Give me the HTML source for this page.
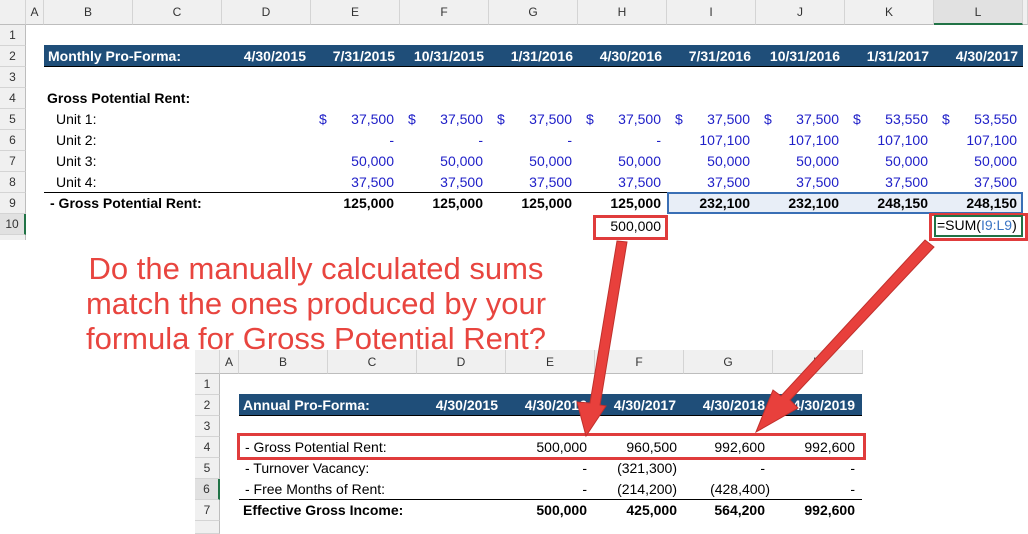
<!DOCTYPE html>
<html><head><meta charset="utf-8"><style>
*{margin:0;padding:0;box-sizing:border-box}
body{width:1028px;height:534px;background:#fff;position:relative;overflow:hidden;font-family:"Liberation Sans",Arial,sans-serif;font-size:13px;color:#000}
.a{position:absolute;white-space:nowrap}
.hd{position:absolute;background:#f0f0f0;border-right:1px solid #d4d4d4;border-bottom:1px solid #bdbdbd;color:#333;font-size:12px;text-align:center}
.rn{position:absolute;background:#f0f0f0;border-bottom:1px solid #d4d4d4;border-right:1px solid #bdbdbd;color:#333;font-size:12px;text-align:center}
.r{text-align:right}
.b{font-weight:bold}
.bl{color:#2020c8}
.w{color:#fff;font-weight:bold}
.l{font-size:14px}
</style></head><body>

<!-- TOP SHEET -->
<div class="hd" style="left:0;top:0;width:26px;height:25px"></div>
<div class="hd" style="left:26px;top:0;width:18px;height:25px;line-height:25px">A</div>
<div class="hd" style="left:44px;top:0;width:89px;height:25px;line-height:25px">B</div>
<div class="hd" style="left:133px;top:0;width:89px;height:25px;line-height:25px">C</div>
<div class="hd" style="left:222px;top:0;width:89px;height:25px;line-height:25px">D</div>
<div class="hd" style="left:311px;top:0;width:89px;height:25px;line-height:25px">E</div>
<div class="hd" style="left:400px;top:0;width:89px;height:25px;line-height:25px">F</div>
<div class="hd" style="left:489px;top:0;width:89px;height:25px;line-height:25px">G</div>
<div class="hd" style="left:578px;top:0;width:89px;height:25px;line-height:25px">H</div>
<div class="hd" style="left:667px;top:0;width:89px;height:25px;line-height:25px">I</div>
<div class="hd" style="left:756px;top:0;width:89px;height:25px;line-height:25px">J</div>
<div class="hd" style="left:845px;top:0;width:89px;height:25px;line-height:25px">K</div>
<div class="hd" style="left:934px;top:0;width:89px;height:25px;line-height:25px;background:#e1e1e1;border-bottom:2px solid #217346">L</div>
<div class="hd" style="left:1023px;top:0;width:5px;height:25px"></div>

<div class="rn" style="left:0;top:25px;width:26px;height:21px;line-height:21px">1</div>
<div class="rn" style="left:0;top:46px;width:26px;height:21px;line-height:21px">2</div>
<div class="rn" style="left:0;top:67px;width:26px;height:21px;line-height:21px">3</div>
<div class="rn" style="left:0;top:88px;width:26px;height:21px;line-height:21px">4</div>
<div class="rn" style="left:0;top:109px;width:26px;height:21px;line-height:21px">5</div>
<div class="rn" style="left:0;top:130px;width:26px;height:21px;line-height:21px">6</div>
<div class="rn" style="left:0;top:151px;width:26px;height:21px;line-height:21px">7</div>
<div class="rn" style="left:0;top:172px;width:26px;height:21px;line-height:21px">8</div>
<div class="rn" style="left:0;top:193px;width:26px;height:21px;line-height:21px">9</div>
<div class="rn" style="left:0;top:214px;width:26px;height:21px;line-height:21px;background:#e1e1e1;border-right:2px solid #217346">10</div>
<div class="rn" style="left:0;top:235px;width:26px;height:5px;border-bottom:none"></div>

<div class="a" style="left:44px;top:45px;width:979px;height:22px;background:#1f4e79;border-bottom:1px solid #000"></div>
<div class="a w l" style="left:48px;top:48px">Monthly Pro-Forma:</div>
<div class="a w r l" style="left:222px;top:48px;width:84px">4/30/2015</div>
<div class="a w r l" style="left:311px;top:48px;width:84px">7/31/2015</div>
<div class="a w r l" style="left:400px;top:48px;width:84px">10/31/2015</div>
<div class="a w r l" style="left:489px;top:48px;width:84px">1/31/2016</div>
<div class="a w r l" style="left:578px;top:48px;width:84px">4/30/2016</div>
<div class="a w r l" style="left:667px;top:48px;width:84px">7/31/2016</div>
<div class="a w r l" style="left:756px;top:48px;width:84px">10/31/2016</div>
<div class="a w r l" style="left:845px;top:48px;width:84px">1/31/2017</div>
<div class="a w r l" style="left:934px;top:48px;width:84px">4/30/2017</div>

<div class="a b l" style="left:47px;top:90px">Gross Potential Rent:</div>
<div class="a l" style="left:56px;top:111px">Unit 1:</div>
<div class="a l" style="left:56px;top:132px">Unit 2:</div>
<div class="a l" style="left:56px;top:153px">Unit 3:</div>
<div class="a l" style="left:56px;top:174px">Unit 4:</div>
<div class="a b l" style="left:50px;top:195px">- Gross Potential Rent:</div>

<div class="a" style="left:667px;top:192px;width:356px;height:22px;background:#e8eef7;border:2px solid #3a6fb5"></div>
<div class="a" style="left:44px;top:192px;width:623px;height:1px;background:#000"></div>

<div id="top"></div>

<div class="a" style="left:593px;top:215px;width:75px;height:25px;border:3px solid #e03c3c"></div>
<div class="a r l" style="left:593px;top:218px;width:68px">500,000</div>
<div class="a" style="left:929px;top:213px;width:99px;height:28px;border:3px solid #e03c3c"></div>
<div class="a" style="left:934px;top:215px;width:89px;height:22px;border:2px solid #217346"></div>
<div class="a l" style="left:937px;top:217px">=SUM(<span style="color:#3a74c4">I9:L9</span>)</div>

<!-- RED TEXT -->
<div class="a" style="left:56px;top:251px;font-size:31px;line-height:35px;color:#e8453f;text-align:center;width:520px">Do the manually calculated sums<br>match the ones produced by your<br>formula for Gross Potential Rent?</div>

<!-- BOTTOM SHEET -->
<div class="hd" style="left:195px;top:350px;width:25px;height:24px"></div>
<div class="hd" style="left:220px;top:350px;width:19px;height:24px;line-height:24px">A</div>
<div class="hd" style="left:239px;top:350px;width:89px;height:24px;line-height:24px">B</div>
<div class="hd" style="left:328px;top:350px;width:89px;height:24px;line-height:24px">C</div>
<div class="hd" style="left:417px;top:350px;width:89px;height:24px;line-height:24px">D</div>
<div class="hd" style="left:506px;top:350px;width:89px;height:24px;line-height:24px">E</div>
<div class="hd" style="left:595px;top:350px;width:89px;height:24px;line-height:24px">F</div>
<div class="hd" style="left:684px;top:350px;width:89px;height:24px;line-height:24px">G</div>
<div class="hd" style="left:773px;top:350px;width:90px;height:24px;line-height:24px">H</div>
<div class="rn" style="left:195px;top:374px;width:25px;height:21px;line-height:21px">1</div>
<div class="rn" style="left:195px;top:395px;width:25px;height:21px;line-height:21px">2</div>
<div class="rn" style="left:195px;top:416px;width:25px;height:21px;line-height:21px">3</div>
<div class="rn" style="left:195px;top:437px;width:25px;height:21px;line-height:21px">4</div>
<div class="rn" style="left:195px;top:458px;width:25px;height:21px;line-height:21px">5</div>
<div class="rn" style="left:195px;top:479px;width:25px;height:21px;line-height:21px;background:#e1e1e1;border-right:2px solid #217346">6</div>
<div class="rn" style="left:195px;top:500px;width:25px;height:21px;line-height:21px">7</div>
<div class="rn" style="left:195px;top:521px;width:25px;height:13px"></div>

<div class="a" style="left:239px;top:394px;width:623px;height:22px;background:#1f4e79;border-bottom:1px solid #000"></div>
<div class="a w l" style="left:243px;top:397px">Annual Pro-Forma:</div>
<div class="a w r l" style="left:417px;top:397px;width:81px">4/30/2015</div>
<div class="a w r l" style="left:506px;top:397px;width:81px">4/30/2016</div>
<div class="a w r l" style="left:595px;top:397px;width:81px">4/30/2017</div>
<div class="a w r l" style="left:684px;top:397px;width:81px">4/30/2018</div>
<div class="a w r l" style="left:773px;top:397px;width:82px">4/30/2019</div>

<div class="a" style="left:237px;top:433px;width:629px;height:27px;border:3px solid #e03c3c"></div>
<div class="a l" style="left:245px;top:439px">- Gross Potential Rent:</div>
<div class="a l" style="left:245px;top:460px">- Turnover Vacancy:</div>
<div class="a l" style="left:245px;top:481px">- Free Months of Rent:</div>
<div class="a b l" style="left:243px;top:502px">Effective Gross Income:</div>
<div class="a" style="left:239px;top:499px;width:623px;height:1px;background:#000"></div>

<div class="a r l" style="left:506px;top:439px;width:81px">500,000</div>
<div class="a r l" style="left:595px;top:439px;width:82px">960,500</div>
<div class="a r l" style="left:684px;top:439px;width:81px">992,600</div>
<div class="a r l" style="left:773px;top:439px;width:82px">992,600</div>
<div class="a r l" style="left:506px;top:460px;width:81px">-</div>
<div class="a r l" style="left:595px;top:460px;width:82px">(321,300)</div>
<div class="a r l" style="left:684px;top:460px;width:81px">-</div>
<div class="a r l" style="left:773px;top:460px;width:82px">-</div>
<div class="a r l" style="left:506px;top:481px;width:81px">-</div>
<div class="a r l" style="left:595px;top:481px;width:82px">(214,200)</div>
<div class="a r l" style="left:684px;top:481px;width:86px">(428,400)</div>
<div class="a r l" style="left:773px;top:481px;width:82px">-</div>
<div class="a r b l" style="left:506px;top:502px;width:81px">500,000</div>
<div class="a r b l" style="left:595px;top:502px;width:82px">425,000</div>
<div class="a r b l" style="left:684px;top:502px;width:81px">564,200</div>
<div class="a r b l" style="left:773px;top:502px;width:82px">992,600</div>

<!-- ARROWS -->
<svg class="a" style="left:0;top:0" width="1028" height="534">
<g fill="#e8403c" stroke="#c0302c" stroke-width="1">
<polygon points="617,241 627,242 600,405 606,406 586,436 577,402 590,403"/>
<polygon points="925,240 934,247 790,400 798,408 756,432 773,390 781,396"/>
</g>
</svg>

<script>
var rows=[
["$","37,500","$","37,500","$","37,500","$","37,500","$","37,500","$","37,500","$","53,550","$","53,550"],
["","-","","-","","-","","-","","107,100","","107,100","","107,100","","107,100"],
["","50,000","","50,000","","50,000","","50,000","","50,000","","50,000","","50,000","","50,000"],
["","37,500","","37,500","","37,500","","37,500","","37,500","","37,500","","37,500","","37,500"]];
var h='';
for(var r=0;r<4;r++){for(var c=0;c<8;c++){var x=311+c*89,y=111+r*21;
if(rows[r][c*2])h+='<div class="a bl l" style="left:'+(x+8)+'px;top:'+y+'px">$</div>';
h+='<div class="a bl r l" style="left:'+x+'px;top:'+y+'px;width:83px">'+rows[r][c*2+1]+'</div>';}}
var t=["125,000","125,000","125,000","125,000","232,100","232,100","248,150","248,150"];
for(var c=0;c<8;c++)h+='<div class="a b r l" style="left:'+(311+c*89)+'px;top:195px;width:83px">'+t[c]+'</div>';
document.getElementById('top').outerHTML=h;
</script>
</body></html>
